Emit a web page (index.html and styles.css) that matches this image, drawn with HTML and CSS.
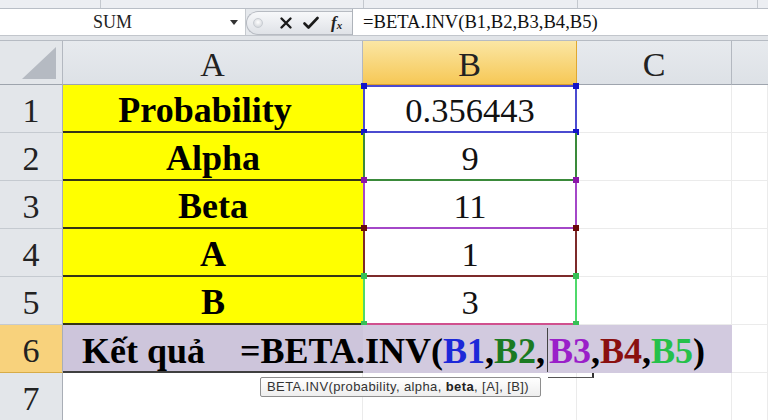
FILE: index.html
```html
<!DOCTYPE html>
<html>
<head>
<meta charset="utf-8">
<link rel="stylesheet" href="styles.css">
</head>
<body>
<div class="app">
  <div class="ribbon-edge">
    <span class="seg s1"></span><span class="seg s2"></span><span class="seg s3"></span><span class="seg s4"></span>
  </div>
  <div class="fbar">
    <div class="namebox"><span class="name">SUM</span><span class="dd"></span></div>
    <div class="btns">
      <div class="pill">
        <span class="dot"></span>
        <svg class="ico" width="14" height="14" viewBox="0 0 14 14"><path d="M2.5 2.5 L11.5 11.5 M11.5 2.5 L2.5 11.5" stroke="#1a1a1a" stroke-width="2.4" stroke-linecap="round" fill="none"/></svg>
        <svg class="ico" width="16" height="14" viewBox="0 0 16 14"><path d="M1.5 7.5 L5.5 11.5 L14.5 2" stroke="#1a1a1a" stroke-width="2.6" stroke-linecap="round" stroke-linejoin="round" fill="none"/></svg>
        <span class="fx">f<sub>x</sub></span>
      </div>
    </div>
    <div class="finput">=BETA.INV(B1,B2,B3,B4,B5)</div>
  </div>
  <div class="sep"></div>
  <div class="sheet">
    <div class="corner"><svg width="40" height="36" viewBox="0 0 40 36"><polygon points="38,2 38,34 4,34" fill="#b5bac2"/></svg></div>
    <div class="colh">A</div>
    <div class="colh sel">B</div>
    <div class="colh">C</div>
    <div class="colh last"></div>

    <div class="rowh">1</div>
    <div class="acell prob">Probability</div>
    <div class="bcell r1">0.356443<span class="h tl"></span><span class="h tr"></span><span class="h bl"></span><span class="h br"></span></div>
    <div class="cell"></div>
    <div class="cell"></div>

    <div class="rowh">2</div>
    <div class="acell">Alpha</div>
    <div class="bcell r2">9<span class="h bl"></span><span class="h br"></span></div>
    <div class="cell"></div>
    <div class="cell"></div>

    <div class="rowh">3</div>
    <div class="acell">Beta</div>
    <div class="bcell r3">11<span class="h tl"></span><span class="h tr"></span><span class="h bl"></span><span class="h br"></span></div>
    <div class="cell"></div>
    <div class="cell"></div>

    <div class="rowh">4</div>
    <div class="acell">A</div>
    <div class="bcell r4">1<span class="h tl"></span><span class="h tr"></span><span class="h bl"></span><span class="h br"></span></div>
    <div class="cell"></div>
    <div class="cell"></div>

    <div class="rowh">5</div>
    <div class="acell">B</div>
    <div class="bcell r5">3<span class="h tl"></span><span class="h tr"></span><span class="h bl"></span><span class="h br"></span></div>
    <div class="cell"></div>
    <div class="cell"></div>

    <div class="rowh sel">6</div>
    <div class="result"><span class="lbl">Kết quả</span><span class="expr">=BETA.INV(<span class="c1">B1</span>,<span class="c2">B2</span>,<span class="caret"></span><span class="c3">B3</span>,<span class="c4">B4</span>,<span class="c5">B5</span>)</span></div>
    <div class="cell"></div>

    <div class="rowh">7</div>
    <div class="cell"></div>
    <div class="cell"></div>
    <div class="cell"></div>
    <div class="cell"></div>
  </div>
  <div class="tip">BETA.INV(probability, alpha, <b>beta</b>, [A], [B])</div>
</div>
</body>
</html>
```
FILE: styles.css
```css
* { box-sizing: border-box; }
html, body { margin: 0; padding: 0; }
body { width: 768px; height: 420px; overflow: hidden; background: #fff; font-family: "Liberation Serif", "Times New Roman", serif; }
.app { position: relative; width: 768px; height: 420px; }

.ribbon-edge { height: 9px; display: flex; background: #eceef2; border-bottom: 1px solid #b9bec6; }
.seg { height: 100%; border-right: 1px solid #c4c8ce; }
.s1 { width: 101px; }
.s2 { width: 263px; }
.s3 { width: 214px; }
.s4 { width: 180px; }

.fbar { height: 27px; display: flex; background: #e6e9ed; border-bottom: 1px solid #c2c6cc; }
.namebox { width: 246px; background: #fff; display: flex; align-items: center; border-right: 1px solid #c6cacf; }
.name { width: 225px; text-align: center; font-size: 18px; color: #222; }
.dd { width: 0; height: 0; border-left: 4px solid transparent; border-right: 4px solid transparent; border-top: 5px solid #333; margin-left: 5px; }
.btns { width: 106px; display: flex; align-items: center; padding-top: 1px; }
.pill { height: 24px; flex: 1; display: flex; align-items: center; gap: 10px; padding-left: 6px; border: 1px solid #b7bbc2; border-right: none; border-radius: 12px 0 0 12px; background: linear-gradient(#f7f8fa, #dfe2e7); }
.dot { width: 10px; height: 10px; border-radius: 50%; background: radial-gradient(circle at 50% 40%, #fff, #c9cdd3); border: 1px solid #c8ccd2; margin-right: 6px; }
.ico { display: block; }
.fx { font-style: italic; font-weight: bold; font-size: 17px; color: #222; margin-left: 2px; }
.fx sub { font-size: 11px; vertical-align: -1px; }
.finput { flex: 1; background: #fff; border-left: 1px solid #aeb3ba; font-size: 18.6px; color: #111; padding-left: 10px; line-height: 26px; }

.sep { height: 5px; background: #e1e4e8; border-bottom: 1px solid #b6bbc3; }

.sheet { display: grid; grid-template-columns: 63px 300px 214px 155px 36px; grid-template-rows: 44px repeat(7, 48px); }
.corner { background: #e3e6ea; border-right: 1px solid #b3b8c0; border-bottom: 1px solid #9ea4ad; display: flex; align-items: flex-end; justify-content: flex-end; padding: 0 4px 3px 0; }
.colh { background: linear-gradient(#e7eaee, #dde1e6); border-right: 1px solid #b3b8c0; border-bottom: 1px solid #9ea4ad; text-align: center; font-size: 34px; line-height: 41px; padding-top: 3px; color: #222; }
.colh.sel { background: linear-gradient(#fbe6a4, #f6c856); border-right-color: #e0a830; border-bottom-color: #d99f2c; }
.colh.last { border-right: none; }

.rowh { background: #e3e6ea; border-right: 1px solid #a9aeb6; border-bottom: 1px solid #c5cad0; text-align: center; font-size: 34px; line-height: 44px; padding-top: 4px; color: #222; }
.rowh.sel { background: #f8d27c; border-bottom-color: #d7ac48; }

.acell { background: #ffff00; border-bottom: 2px solid #353515; text-align: center; font-weight: bold; font-size: 36px; line-height: 44px; padding-top: 3px; color: #000; }
.acell.prob { padding-right: 16px; }
.cell { border-right: 1px solid #ebebeb; border-bottom: 1px solid #ebebeb; }

.bcell { position: relative; background: #fff; border-left: 2px solid; border-right: 2px solid; border-bottom: 2px solid; text-align: center; font-size: 34.5px; line-height: 44px; padding-top: 3px; color: #111; }
.r1 { border-color: #4b4bd0; border-top: 2px solid #4b4bd0; padding-top: 1px; }
.r2 { border-color: #3a8a3a; }
.r3 { border-color: #a447c8; }
.r4 { border-color: #7d2a2a; }
.r5 { border-color: #4fd96a; border-bottom-color: #d0508e; }
.h { position: absolute; width: 6px; height: 6px; }
.h.tl { left: -4px; top: -4px; }
.h.tr { right: -4px; top: -4px; }
.h.bl { left: -4px; bottom: -4px; }
.h.br { right: -4px; bottom: -4px; }
.r1 .h { background: #1414c8; }
.r2 .h { background: #1d6a1d; }
.r3 .h { background: #8b16a8; }
.r4 .h { background: #6a0a0a; }
.r5 .h { background: #36c056; }

.result { grid-column: 2 / span 3; background: linear-gradient(to right, #cdc5db 0, #cdc5db 300px, #d2cadf 300px); font-weight: bold; font-size: 36px; line-height: 44px; padding: 3px 0 0 19px; white-space: nowrap; color: #000; position: relative; }
.result::after { content: ""; position: absolute; left: 0; bottom: 0; width: 300px; height: 2px; background: #3f3f3f; }
.expr { margin-left: 35px; }
.c1 { color: #1c28d8; }
.c2 { color: #1b7a22; }
.c3 { color: #9a1fc9; position: relative; }
.c3::after { content: ""; position: absolute; left: -1px; right: -3px; bottom: -7px; height: 4px; border-bottom: 1px solid #555; border-right: 2px solid #333; }
.c4 { color: #8a1010; }
.c5 { color: #25c04a; }
.caret { display: inline-block; width: 0; height: 44px; border-left: 1px solid #444; vertical-align: -9px; margin: 0 1px 0 2px; }

.tip { position: absolute; left: 260px; top: 377px; width: 281px; height: 20px; border: 1px solid #8e8e8e; border-radius: 2px; background: linear-gradient(#ffffff, #eeeeee); font-family: "Liberation Sans", Arial, sans-serif; font-size: 13px; letter-spacing: 0.4px; line-height: 18px; color: #333; padding-left: 6px; white-space: nowrap; }
.tip b { color: #222; }
```
